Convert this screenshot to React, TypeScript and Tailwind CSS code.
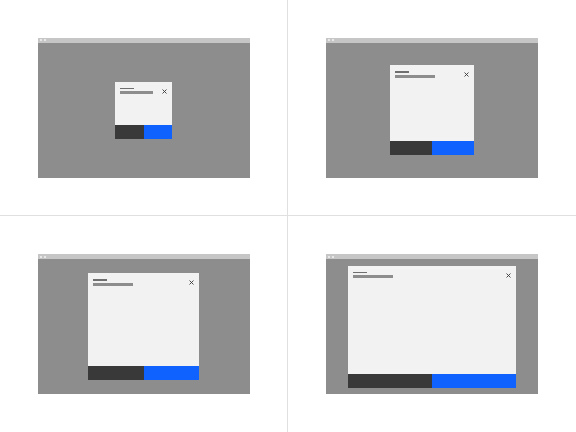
const modals = [
  { box: "w-[57px] h-[57px]", sub: "w-[33px]" },
  { box: "w-[84px] h-[90px]", sub: "w-[40px]" },
  { box: "w-[111px] h-[107px]", sub: "w-[40px]" },
  { box: "w-[168px] h-[122px]", sub: "w-[40px]" },
];

const cellBorders = [
  "border-r border-b",
  "border-b",
  "border-r",
  "",
];

function CloseIcon() {
  return (
    <svg width="5" height="5" viewBox="0 0 5 5" className="shrink-0">
      <path d="M0.5 0.5L4.5 4.5M4.5 0.5L0.5 4.5" stroke="#393939" strokeWidth="0.9" />
    </svg>
  );
}

function Modal({ box, sub }: { box: string; sub: string }) {
  return (
    <div className={`${box} bg-[#f2f2f2] flex flex-col`}>
      <div className="flex-1 flex justify-between pl-[5px] pr-[5px] pt-[6px]">
        <div className="flex flex-col gap-[2px]">
          <div className="w-[14px] h-[1.5px] bg-[#6f6f6f]" />
          <div className={`${sub} h-[3px] bg-[#8d8d8d]`} />
        </div>
        <div className="pt-[1px]">
          <CloseIcon />
        </div>
      </div>
      <div className="flex h-[14px]">
        <div className="flex-1 bg-[#393939]" />
        <div className="flex-1 bg-[#0f62fe]" />
      </div>
    </div>
  );
}

function BrowserWindow({ box, sub }: { box: string; sub: string }) {
  return (
    <div className="w-[212px] h-[140px] flex flex-col">
      <div className="h-[5px] bg-[#c6c6c6] flex items-center gap-[2px] pl-[2px]">
        <span className="w-[2px] h-[2px] bg-[#e8e8e8]" />
        <span className="w-[2px] h-[2px] bg-[#e8e8e8]" />
      </div>
      <div className="flex-1 bg-[#8d8d8d] flex items-center justify-center">
        <Modal box={box} sub={sub} />
      </div>
    </div>
  );
}

export default function App() {
  return (
    <div className="w-[576px] h-[432px] bg-white grid grid-cols-[288px_288px] grid-rows-[216px_216px] overflow-hidden">
      {modals.map((m, i) => (
        <div key={i} className={`${cellBorders[i]} border-[#e0e0e0] flex items-center justify-center`}>
          <BrowserWindow box={m.box} sub={m.sub} />
        </div>
      ))}
    </div>
  );
}
